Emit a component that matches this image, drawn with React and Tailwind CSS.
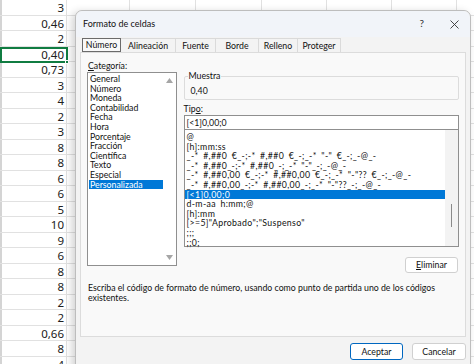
import React from 'react';

const cells = ['3', '0,46', '2', '0,40', '0,73', '3', '4', '2', '3', '8', '8', '6', '6', '5', '10', '9', '6', '8', '8', '2', '2', '0,66', '8', '4'];

const categories = ['General', 'Número', 'Moneda', 'Contabilidad', 'Fecha', 'Hora', 'Porcentaje', 'Fracción', 'Científica', 'Texto', 'Especial', 'Personalizada'];

const formats = [
  '@',
  '[h]:mm:ss',
  '_-* #,##0 €_-;-* #,##0 €_-;_-* "-" €_-;_-@_-',
  '_-* #,##0_-;-* #,##0_-;_-* "-"_-;_-@_-',
  '_-* #,##0,00 €_-;-* #,##0,00 €_-;_-* "-"?? €_-;_-@_-',
  '_-* #,##0,00_-;-* #,##0,00_-;_-* "-"??_-;_-@_-',
  '[<1]0,00;0',
  'd-m-aa h:mm;@',
  '[h]:mm',
  '[>=5]"Aprobado";"Suspenso"',
  ';;;',
  ';;0;',
];

const tabs = [
  { label: 'Número', w: 'w-[39px]' },
  { label: 'Alineación', w: 'w-[55px]' },
  { label: 'Fuente', w: 'w-[40px]' },
  { label: 'Borde', w: 'w-[43px]' },
  { label: 'Relleno', w: 'w-[39px]' },
  { label: 'Proteger', w: 'w-[43px]' },
];

const Sheet = () => (
  <div className="flex flex-col">
    {cells.map((v, i) => (
      <div key={i} className="flex h-[15.5px] border-b border-[#e1e1e1]">
        <div className="w-[67px] shrink-0 border-l-2 border-l-[#d4d4d4] border-r border-[#e1e1e1] text-right pr-[2px] text-[11.5px] leading-[15px] text-[#202020]">
          {v}
        </div>
        <div className="w-[63px] shrink-0 border-r border-[#e1e1e1]" />
        <div className="w-[66px] shrink-0 border-r border-[#e1e1e1]" />
        <div className="w-[66px] shrink-0 border-r border-[#e1e1e1]" />
        <div className="w-[65px] shrink-0 border-r border-[#e1e1e1]" />
        <div className="w-[65px] shrink-0 border-r border-[#e1e1e1]" />
        <div className="w-[65px] shrink-0 border-r border-[#e1e1e1]" />
      </div>
    ))}
  </div>
);

const UpArrow = () => (
  <svg width="7" height="5" viewBox="0 0 7 5"><path d="M0 5 L3.5 0 L7 5 Z" fill="#a6a6a6" /></svg>
);
const DownArrow = () => (
  <svg width="7" height="5" viewBox="0 0 7 5"><path d="M0 0 L3.5 5 L7 0 Z" fill="#a6a6a6" /></svg>
);

export default function App() {
  return (
    <div className="relative w-[474px] h-[364px] overflow-hidden bg-white" style={{ fontFamily: '"Noto Sans", "Open Sans", sans-serif' }}>
      <Sheet />

      {/* selected cell */}
      <div className="absolute left-0 top-[46.5px] w-[68px] h-[16.5px] border-2 border-[#107c41]" />
      <div className="absolute left-[65px] top-[60px] w-[4px] h-[4px] bg-[#107c41] border border-white" />

      {/* dialog */}
      <div
        className="absolute left-[75px] top-[10px] w-[396px] h-[370px] bg-[#f3f3f3] border border-[#bdbdbd] rounded-t-[7px] shadow-[-3px_2px_8px_rgba(0,0,0,0.18)] text-[#111] text-[8.75px] leading-[9.6px]"
        style={{ fontFamily: 'Lato, "Noto Sans", sans-serif' }}
      >
        {/* title bar */}
        <div className="h-[26px] flex items-center pl-[7px] pr-[10px] bg-[#f1f4f9] rounded-t-[7px]">
          <span className="text-[9px]">Formato de celdas</span>
          <span className="ml-auto text-[10px] text-[#333] mr-[26px]">?</span>
          <svg width="9" height="9" viewBox="0 0 9 9" className="mr-[1px]"><path d="M0.5 0.5 L8.5 8.5 M8.5 0.5 L0.5 8.5" stroke="#333" strokeWidth="0.9" /></svg>
        </div>

        {/* tabs */}
        <div className="flex pl-[6px] h-[15px] items-end">
          {tabs.map((t, i) => (
            <div
              key={t.label}
              className={`${t.w} h-[14px] flex items-center justify-center ${
                i === 0
                  ? 'bg-[#f9f9f9] border border-[#6b6b6b]'
                  : 'bg-[#f3f3f3] border-t border-r border-[#dadada]'
              }`}
            >
              {t.label}
            </div>
          ))}
        </div>

        {/* panel */}
        <div className="mx-[4px] h-[285px] bg-[#f9f9f9] border border-[#dcdcdc] px-[6px] pt-[7px] flex flex-col">
          <div className="flex gap-[7px]">
            {/* category column */}
            <div className="w-[90px] flex flex-col">
              <div className="h-[11px] pl-[1px] leading-[11px]"><span className="underline">C</span>ategoría:</div>
              <div className="mt-[1px] h-[194px] bg-white border border-[#8f8f8f] flex">
                <div className="flex-1 pt-[1px] pl-[1px] flex flex-col">
                  {categories.map((c, i) => (
                    <div key={c} className={`h-[9.6px] pl-[1px] whitespace-nowrap ${i === 11 ? 'bg-[#0078d7] text-white' : ''}`}>{c}</div>
                  ))}
                </div>
                <div className="w-[13px] flex flex-col items-center justify-between py-[5px]">
                  <UpArrow />
                  <DownArrow />
                </div>
              </div>
            </div>

            {/* type column */}
            <div className="w-[277px] flex flex-col pt-[16px]">
              <div className="relative h-[24px] border border-[#dcdcdc] rounded-[2px]">
                <span className="absolute -top-[6px] left-[3px] px-[1px] bg-[#f9f9f9]">Muestra</span>
                <div className="pt-[9px] pl-[6px]">0,40</div>
              </div>
              <div className="mt-[4px] h-[10px] leading-[10px]">Tip<span className="underline">o</span>:</div>
              <div className="mt-[1px] h-[14px] bg-white border border-[#8f8f8f] border-b-0 pl-[2px] flex items-center">[&lt;1]0,00;0</div>
              <div className="h-[118px] bg-white border border-[#8f8f8f] flex">
                <div className="flex-1 pt-[2px] flex flex-col">
                  {formats.map((f, i) => (
                    <div key={i} className={`h-[9.6px] pl-[2px] whitespace-pre tracking-[0.35px] [word-spacing:2px] ${i === 6 ? 'bg-[#0078d7] text-white' : ''}`}>{f}</div>
                  ))}
                </div>
                <div className="w-[13px] bg-[#f3f3f3] flex flex-col items-center pt-[74px]">
                  <div className="w-[1px] h-[23px] bg-[#8a8a8a]" />
                </div>
              </div>
              <div className="flex justify-end mt-[10px] pr-[1px]">
                <div className="w-[53px] h-[16px] bg-white border border-[#d0d0d0] rounded-[3px] flex items-center justify-center">
                  <span><span className="underline">E</span>liminar</span>
                </div>
              </div>
            </div>
          </div>
          <div className="mt-[10px] pl-[1px] leading-[10px]">
            Escriba el código de formato de número, usando como punto de partida uno de los códigos existentes.
          </div>
        </div>

        {/* footer buttons */}
        <div className="flex justify-end gap-[9px] pr-[4px] pt-[6px]">
          <div className="w-[53px] h-[17px] bg-white border border-[#0067c0] rounded-[3px] flex items-center justify-center">Aceptar</div>
          <div className="w-[54px] h-[17px] bg-white border border-[#d0d0d0] rounded-[3px] flex items-center justify-center">Cancelar</div>
        </div>
      </div>
    </div>
  );
}
